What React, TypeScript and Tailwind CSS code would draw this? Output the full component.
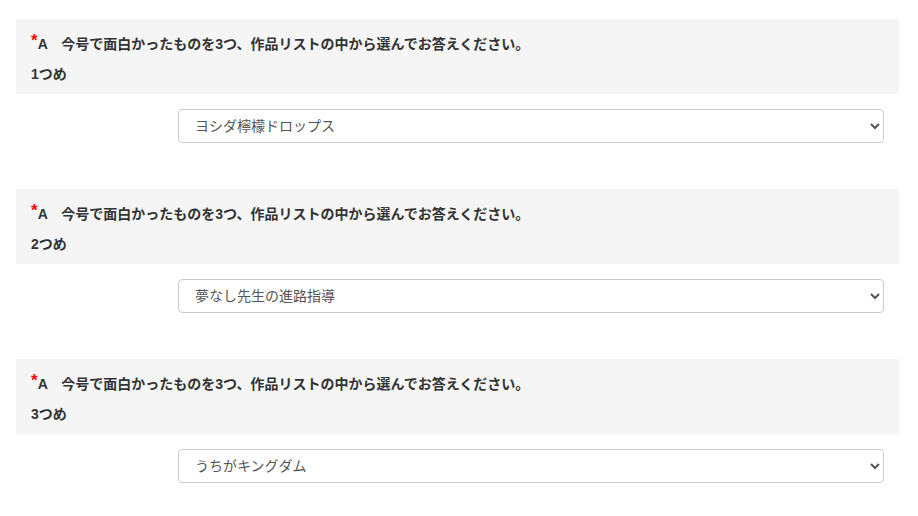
import React from "react";

const items = [
  { n: "1つめ", v: "ヨシダ檸檬ドロップス" },
  { n: "2つめ", v: "夢なし先生の進路指導" },
  { n: "3つめ", v: "うちがキングダム" },
];

export default function App() {
  return (
    <div
      className="w-[918px] h-[516px] overflow-hidden bg-white pt-[19px] pl-[16px] pr-[19px]"
      style={{ fontFamily: '"Liberation Sans", Arial, "Noto Sans CJK JP", sans-serif' }}
    >
      {items.map((it, i) => (
        <div key={i} className="mb-[46px]">
          <div className="bg-[#f5f5f5] h-[75px] pl-[15px] pt-[15px] text-[14px] font-bold text-[#333]">
            <div className="h-[20px] leading-[20px] flex items-center">
              <span className="text-[#ff0000] text-[17px] relative -top-[4px] leading-none">*</span>
              <span>A　今号で面白かったものを3つ、作品リストの中から選んでお答えください。</span>
            </div>
            <div className="h-[20px] leading-[20px] mt-[10px]">{it.n}</div>
          </div>
          <div className="mt-[15px] pl-[162px]">
            <select
              defaultValue={it.v}
              className="w-[706px] h-[34px] border border-[#cccccc] rounded-[4px] bg-white pl-[12px] text-[14px] text-[#555555]"
            >
              <option>{it.v}</option>
            </select>
          </div>
        </div>
      ))}
    </div>
  );
}
